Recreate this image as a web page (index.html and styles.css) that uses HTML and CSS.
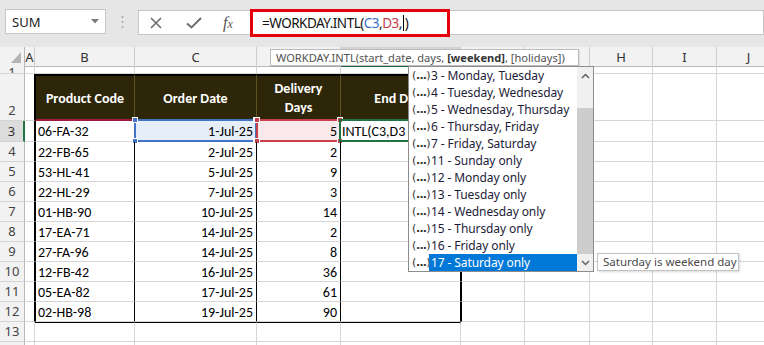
FILE: index.html
```html
<!DOCTYPE html>
<html>
<head>
<meta charset="utf-8">
<link rel="stylesheet" href="styles.css">
</head>
<body>
<div class="app">
  <div class="toolbar">
    <div class="namebox"><span>SUM</span><svg class="tri" width="8" height="5" viewBox="0 0 8 5"><path d="M0 0h8L4 4.5z" fill="#7a7a7a"/></svg></div>
    <div class="grip"><svg width="3" height="14" viewBox="0 0 3 14"><circle cx="1.5" cy="2" r="1" fill="#a8a8a8"/><circle cx="1.5" cy="7" r="1" fill="#a8a8a8"/><circle cx="1.5" cy="12" r="1" fill="#a8a8a8"/></svg></div>
    <div class="fxbtns">
      <svg class="ico-x" width="12" height="12" viewBox="0 0 12 12"><path d="M1 1L11 11M11 1L1 11" stroke="#6e6e6e" stroke-width="1.6" fill="none"/></svg>
      <svg class="ico-ok" width="16" height="12" viewBox="0 0 16 12"><path d="M1 6.5L5.5 10.5L15 1" stroke="#6e6e6e" stroke-width="2" fill="none"/></svg>
      <span class="fx">f<span class="fxx">x</span></span>
    </div>
    <div class="formula">
      <div class="ftext">=WORKDAY.INTL(<span class="rc">C3</span>,<span class="rd">D3</span>,<span class="caret"></span>)</div>
    </div>
  </div>

  <div class="sheet">
    <div class="row r-hd">
      <div class="c ch corner"><svg class="ctri" width="10" height="11" viewBox="0 0 10 11"><path d="M10 0V11H0z" fill="#b5b5b5"/></svg></div>
      <div class="c ch">A</div>
      <div class="c ch">B</div>
      <div class="c ch">C</div>
      <div class="c ch">D</div>
      <div class="c ch selc">E</div>
      <div class="c ch">F</div>
      <div class="c ch">G</div>
      <div class="c ch">H</div>
      <div class="c ch">I</div>
      <div class="c ch">J</div>
    </div>

    <div class="row r1">
      <div class="c rh">1</div><div class="c"></div><div class="c"></div><div class="c"></div><div class="c"></div><div class="c"></div><div class="c"></div><div class="c"></div><div class="c"></div><div class="c"></div><div class="c"></div>
    </div>

    <div class="row r2">
      <div class="c rh">2</div>
      <div class="c ta"></div>
      <div class="c th tl thb">Product Code</div>
      <div class="c th">Order Date</div>
      <div class="c th">Delivery<br>Days</div>
      <div class="c th tr">End Date</div>
      <div class="c tf"></div><div class="c"></div><div class="c"></div><div class="c"></div><div class="c"></div>
    </div>

    <div class="row r3">
      <div class="c rh selr">3</div>
      <div class="c ta"></div>
      <div class="c td tl">06-FA-32</div>
      <div class="c td num refc">1-Jul-25<span class="box bx-c"><i class="h h1"></i><i class="h h2"></i><i class="h h3"></i><i class="h h4"></i></span></div>
      <div class="c td num refd">5<span class="box bx-d"><i class="h h1"></i><i class="h h2"></i><i class="h h3"></i><i class="h h4"></i></span></div>
      <div class="c td tr act">INTL(C3,D3<span class="box bx-e"></span></div>
      <div class="c tf"></div><div class="c"></div><div class="c"></div><div class="c"></div><div class="c"></div>
    </div>

    <div class="row rn"><div class="c rh">4</div><div class="c ta"></div><div class="c td tl">22-FB-65</div><div class="c td num">2-Jul-25</div><div class="c td num">2</div><div class="c td tr"></div><div class="c tf"></div><div class="c"></div><div class="c"></div><div class="c"></div><div class="c"></div></div>
    <div class="row rn"><div class="c rh">5</div><div class="c ta"></div><div class="c td tl">53-HL-41</div><div class="c td num">5-Jul-25</div><div class="c td num">9</div><div class="c td tr"></div><div class="c tf"></div><div class="c"></div><div class="c"></div><div class="c"></div><div class="c"></div></div>
    <div class="row rn"><div class="c rh">6</div><div class="c ta"></div><div class="c td tl">22-HL-29</div><div class="c td num">7-Jul-25</div><div class="c td num">3</div><div class="c td tr"></div><div class="c tf"></div><div class="c"></div><div class="c"></div><div class="c"></div><div class="c"></div></div>
    <div class="row rn"><div class="c rh">7</div><div class="c ta"></div><div class="c td tl">01-HB-90</div><div class="c td num">10-Jul-25</div><div class="c td num">14</div><div class="c td tr"></div><div class="c tf"></div><div class="c"></div><div class="c"></div><div class="c"></div><div class="c"></div></div>
    <div class="row rn"><div class="c rh">8</div><div class="c ta"></div><div class="c td tl">17-EA-71</div><div class="c td num">14-Jul-25</div><div class="c td num">2</div><div class="c td tr"></div><div class="c tf"></div><div class="c"></div><div class="c"></div><div class="c"></div><div class="c"></div></div>
    <div class="row rn"><div class="c rh">9</div><div class="c ta"></div><div class="c td tl">27-FA-96</div><div class="c td num">14-Jul-25</div><div class="c td num">8</div><div class="c td tr"></div><div class="c tf"></div><div class="c"></div><div class="c"></div><div class="c"></div><div class="c"></div></div>
    <div class="row rn"><div class="c rh">10</div><div class="c ta"></div><div class="c td tl">12-FB-42</div><div class="c td num">16-Jul-25</div><div class="c td num">36</div><div class="c td tr"></div><div class="c tf"></div><div class="c"></div><div class="c"></div><div class="c"></div><div class="c"></div></div>
    <div class="row rn"><div class="c rh">11</div><div class="c ta"></div><div class="c td tl">05-EA-82</div><div class="c td num">17-Jul-25</div><div class="c td num">61</div><div class="c td tr"></div><div class="c tf"></div><div class="c"></div><div class="c"></div><div class="c"></div><div class="c"></div></div>
    <div class="row rn"><div class="c rh">12</div><div class="c ta"></div><div class="c td tl">02-HB-98</div><div class="c td num">19-Jul-25</div><div class="c td num">90</div><div class="c td tr"></div><div class="c tf"></div><div class="c"></div><div class="c"></div><div class="c"></div><div class="c"></div></div>

    <div class="row rn"><div class="c rh">13</div><div class="c"></div><div class="c tt"></div><div class="c tt"></div><div class="c tt"></div><div class="c tt"></div><div class="c"></div><div class="c"></div><div class="c"></div><div class="c"></div><div class="c"></div></div>
    <div class="row rn"><div class="c rh">14</div><div class="c"></div><div class="c"></div><div class="c"></div><div class="c"></div><div class="c"></div><div class="c"></div><div class="c"></div><div class="c"></div><div class="c"></div><div class="c"></div></div>
  </div>

  <div class="redbox"></div>

  <div class="fntip">WORKDAY.INTL(start_date, days, <b>[weekend]</b>, [holidays])</div>

  <div class="dropdown">
    <ul class="list">
      <li><span class="ic">(<span class="dd">...</span>)</span><span class="t">3 - Monday, Tuesday</span></li>
      <li><span class="ic">(<span class="dd">...</span>)</span><span class="t">4 - Tuesday, Wednesday</span></li>
      <li><span class="ic">(<span class="dd">...</span>)</span><span class="t">5 - Wednesday, Thursday</span></li>
      <li><span class="ic">(<span class="dd">...</span>)</span><span class="t">6 - Thursday, Friday</span></li>
      <li><span class="ic">(<span class="dd">...</span>)</span><span class="t">7 - Friday, Saturday</span></li>
      <li><span class="ic">(<span class="dd">...</span>)</span><span class="t">11 - Sunday only</span></li>
      <li><span class="ic">(<span class="dd">...</span>)</span><span class="t">12 - Monday only</span></li>
      <li><span class="ic">(<span class="dd">...</span>)</span><span class="t">13 - Tuesday only</span></li>
      <li><span class="ic">(<span class="dd">...</span>)</span><span class="t">14 - Wednesday only</span></li>
      <li><span class="ic">(<span class="dd">...</span>)</span><span class="t">15 - Thursday only</span></li>
      <li><span class="ic">(<span class="dd">...</span>)</span><span class="t">16 - Friday only</span></li>
      <li class="sel"><span class="ic">(<span class="dd">...</span>)</span><span class="t">17 - Saturday only</span></li>
    </ul>
    <div class="sbar">
      <div class="sbtn"><svg width="9" height="6" viewBox="0 0 9 6"><path d="M1 5L4.5 1.5L8 5" stroke="#606060" stroke-width="1.5" fill="none"/></svg></div>
      <div class="strack"><div class="sthumb"></div></div>
      <div class="sbtn"><svg width="9" height="6" viewBox="0 0 9 6"><path d="M1 1L4.5 4.5L8 1" stroke="#606060" stroke-width="1.5" fill="none"/></svg></div>
    </div>
  </div>

  <div class="sidetip">Saturday is weekend day</div>
</div>
</body>
</html>
```

FILE: styles.css
```css
* { box-sizing: border-box; }
html, body { margin: 0; padding: 0; }
body {
  width: 764px;
  height: 345px;
  overflow: hidden;
  background: #fff;
  font-family: "Noto Sans", "Open Sans", sans-serif;
}
.app {
  position: relative;
  width: 764px;
  height: 345px;
  overflow: hidden;
}

/* ---------- toolbar ---------- */
.toolbar {
  height: 47px;
  background: #e6e6e6;
  display: flex;
  align-items: flex-start;
  padding-top: 9px;
}
.namebox {
  margin-left: 5px;
  width: 101px;
  height: 25px;
  background: #fff;
  border: 1px solid #c6c6c6;
  display: flex;
  align-items: center;
  justify-content: space-between;
  padding: 0 6px 0 6px;
  font-size: 13px;
  color: #222;
}
.grip {
  width: 32px;
  height: 25px;
  display: flex;
  align-items: center;
  justify-content: center;
}
.fxbtns {
  width: 112px;
  height: 25px;
  margin-top: 1px;
  background: #fff;
  border: 1px solid #c6c6c6;
  border-right: none;
  display: flex;
  align-items: center;
  padding-left: 11px;
}
.ico-x { margin-right: 24px; }
.ico-ok { margin-right: 21px; }
.fx {
  font-family: "Liberation Serif", serif;
  font-style: italic;
  font-size: 16px;
  color: #555;
  line-height: 1;
}
.fxx { font-size: 12px; }
.formula {
  flex: 1;
  height: 25px;
  margin-top: 1px;
  background: #fff;
  border: 1px solid #c6c6c6;
  display: flex;
  align-items: center;
  padding-left: 11px;
}
.ftext {
  font-size: 13.5px;
  letter-spacing: -0.5px;
  color: #111;
  white-space: nowrap;
  display: flex;
  align-items: center;
}
.rc { color: #3a6fc6; }
.rd { color: #c43a48; }
.caret {
  display: inline-block;
  width: 1px;
  height: 16px;
  background: #000;
  margin: 0 1px;
}
.redbox {
  position: absolute;
  left: 250px;
  top: 9px;
  width: 200px;
  height: 28px;
  border: 3px solid #e6000a;
}

/* ---------- sheet ---------- */
.sheet { background: #fff; }
.row {
  display: grid;
  grid-template-columns: 25px 10px 100px 122px 84px 120px 64px 65px 63px 64px 64px;
}
.r-hd { height: 18px; }
.r1 { height: 9px; }
.r2 { height: 47px; }
.r3 { height: 21px; }
.rn { height: 20px; }
.c {
  position: relative;
  border-right: 1px solid #d6d6d6;
  border-bottom: 1px solid #d6d6d6;
  white-space: nowrap;
  font-family: "Carlito", "Lato", sans-serif;
  font-size: 14px;
  color: #000;
}
.ch {
  background: #f2f2f2;
  border-right-color: #cdcdcd;
  border-bottom-color: #b8b8b8;
  display: flex;
  align-items: center;
  justify-content: center;
  font-family: "Noto Sans", sans-serif;
  font-size: 13px;
  color: #333;
}
.ch.selc { background: #d4d4d4; border-bottom: 2px solid #217346; }
.corner { border-right-color: #b8b8b8; }
.ctri { position: absolute; right: 3px; bottom: 3px; }
.rh {
  background: #f2f2f2;
  border-right-color: #b8b8b8;
  border-bottom-color: #d4d4d4;
  display: flex;
  align-items: flex-end;
  justify-content: center;
  font-family: "Noto Sans", sans-serif;
  font-size: 13px;
  line-height: 18px;
  color: #444;
  overflow: hidden;
  padding-bottom: 1px;
}
.r1 .rh { align-items: flex-start; line-height: 14px; }
.rh.selr { background: #dcdcdc; border-right: 2px solid #217346; color: #333; }

/* table */
.ta { border-right-color: #000; }
.tf { border-left: 1px solid #000; }
.tt { border-top: 1px solid #000; }
.th {
  background: #2e2608;
  color: #fff;
  font-weight: bold;
  font-family: "Carlito", "Lato", sans-serif;
  font-size: 14px;
  line-height: 19px;
  text-align: center;
  border-top: 2px solid #000;
  border-right: 1px solid #5f5322;
  border-bottom: 2px solid #2e2608;
  display: flex;
  align-items: center;
  justify-content: center;
  padding-top: 1px;
}
.th.tl { border-left: 1px solid #000; }
.th.thb { border-bottom-color: #9e1b3d; }
.th.tr { border-right: 1px solid #000; justify-content: center; }
.td {
  display: flex;
  align-items: center;
  padding-top: 1px;
}
.td.tl { border-left: 1px solid #000; border-right-color: #000; padding-left: 2px; }
.td.num { justify-content: flex-end; padding-right: 3px; border-right-color: #000; }
.td.tr { border-right-color: #000; }
.act { overflow: visible; padding-left: 1px; }

.refc { background: #e6eef9; }
.refd { background: #fbe8ea; }
.box {
  position: absolute;
  top: -2px;
  left: -1px;
  right: -1px;
  bottom: -1px;
  border: 2px solid;
  pointer-events: none;
}
.bx-c { border-color: #4373c5; }
.bx-d { border-color: #c9404d; }
.bx-e { border-color: #217346; left: -2px; }
.h {
  position: absolute;
  width: 6px;
  height: 6px;
  border: 1px solid #fff;
}
.bx-c .h { background: #4373c5; }
.bx-d .h { background: #c9404d; }
.h1 { left: -4px; top: -4px; }
.h2 { right: -4px; top: -4px; }
.h3 { left: -4px; bottom: -4px; }
.h4 { right: -4px; bottom: -4px; }

/* ---------- function tooltip ---------- */
.fntip {
  position: absolute;
  left: 270px;
  top: 49px;
  width: 309px;
  height: 17px;
  background: #fff;
  border: 1px solid #bcbcbc;
  font-family: "Noto Sans", sans-serif;
  font-size: 11.1px;
  line-height: 15px;
  color: #505050;
  padding-left: 5px;
  white-space: nowrap;
  box-shadow: 1px 1px 1px rgba(0,0,0,0.08);
}
.fntip b { color: #333; }

/* ---------- dropdown ---------- */
.dropdown {
  position: absolute;
  left: 408px;
  top: 66px;
  width: 186px;
  height: 206px;
  background: #fff;
  border: 1px solid #8c8c8c;
  display: flex;
}
.list {
  list-style: none;
  margin: 0;
  padding: 0;
  width: 168px;
}
.list li {
  height: 17px;
  display: flex;
  align-items: center;
  font-family: "Noto Sans", sans-serif;
  font-size: 12px;
  color: #1c1c38;
  white-space: nowrap;
}
.ic {
  width: 20px;
  flex: none;
  padding-left: 3px;
  font-family: "DejaVu Sans", sans-serif;
  font-size: 11px;
  line-height: 17px;
  color: #333;
  letter-spacing: -0.3px;
}
.dd { font-weight: bold; letter-spacing: -0.8px; }
.t {
  flex: 1;
  height: 17px;
  line-height: 17px;
  padding-left: 2px;
  letter-spacing: -0.1px;
}
.list li.sel .t { background: #0078d7; color: #fff; }
.sbar {
  width: 16px;
  display: flex;
  flex-direction: column;
  background: #f0f0f0;
}
.sbtn {
  height: 17px;
  display: flex;
  align-items: center;
  justify-content: center;
}
.strack {
  flex: 1;
  display: flex;
  flex-direction: column;
  justify-content: flex-end;
}
.sthumb {
  height: 146px;
  background: #cdcdcd;
}

/* ---------- side tooltip ---------- */
.sidetip {
  position: absolute;
  left: 597px;
  top: 253px;
  width: 142px;
  height: 18px;
  background: #fff;
  border: 1px solid #c2c2c2;
  box-shadow: 1px 1px 2px rgba(0,0,0,0.15);
  font-family: "Noto Sans", sans-serif;
  font-size: 11.5px;
  line-height: 16px;
  color: #4a4a4a;
  padding-left: 5px;
  white-space: nowrap;
}
```
